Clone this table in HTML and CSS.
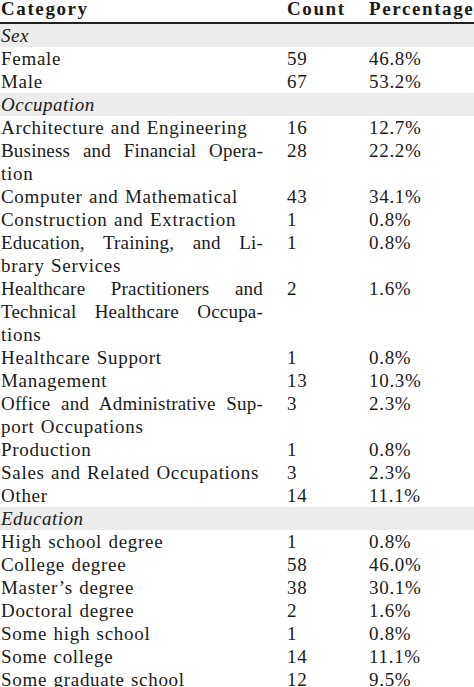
FILE: index.html
```html
<!DOCTYPE html>
<html lang="en">
<head>
<meta charset="utf-8">
<link rel="stylesheet" href="styles.css">
</head>
<body>
<div class="table">
  <div class="row head">
    <div class="c1">Category</div><div class="c2">Count</div><div class="c3">Percentage</div>
  </div>
  <div class="row group"><div class="c1"><i>Sex</i></div></div>
  <div class="row"><div class="c1">Female</div><div class="c2">59</div><div class="c3">46.8%</div></div>
  <div class="row"><div class="c1">Male</div><div class="c2">67</div><div class="c3">53.2%</div></div>
  <div class="row group"><div class="c1"><i>Occupation</i></div></div>
  <div class="row"><div class="c1">Architecture and Engineering</div><div class="c2">16</div><div class="c3">12.7%</div></div>
  <div class="row"><div class="c1"><span class="jl">Business and Financial Opera-</span><span class="ll">tion</span></div><div class="c2">28</div><div class="c3">22.2%</div></div>
  <div class="row"><div class="c1">Computer and Mathematical</div><div class="c2">43</div><div class="c3">34.1%</div></div>
  <div class="row"><div class="c1">Construction and Extraction</div><div class="c2">1</div><div class="c3">0.8%</div></div>
  <div class="row"><div class="c1"><span class="jl">Education, Training, and Li-</span><span class="ll">brary Services</span></div><div class="c2">1</div><div class="c3">0.8%</div></div>
  <div class="row"><div class="c1"><span class="jl">Healthcare Practitioners and</span><span class="jl">Technical Healthcare Occupa-</span><span class="ll">tions</span></div><div class="c2">2</div><div class="c3">1.6%</div></div>
  <div class="row"><div class="c1">Healthcare Support</div><div class="c2">1</div><div class="c3">0.8%</div></div>
  <div class="row"><div class="c1">Management</div><div class="c2">13</div><div class="c3">10.3%</div></div>
  <div class="row"><div class="c1"><span class="jl">Office and Administrative Sup-</span><span class="ll">port Occupations</span></div><div class="c2">3</div><div class="c3">2.3%</div></div>
  <div class="row"><div class="c1">Production</div><div class="c2">1</div><div class="c3">0.8%</div></div>
  <div class="row"><div class="c1">Sales and Related Occupations</div><div class="c2">3</div><div class="c3">2.3%</div></div>
  <div class="row"><div class="c1">Other</div><div class="c2">14</div><div class="c3">11.1%</div></div>
  <div class="row group"><div class="c1"><i>Education</i></div></div>
  <div class="row"><div class="c1">High school degree</div><div class="c2">1</div><div class="c3">0.8%</div></div>
  <div class="row"><div class="c1">College degree</div><div class="c2">58</div><div class="c3">46.0%</div></div>
  <div class="row"><div class="c1">Master’s degree</div><div class="c2">38</div><div class="c3">30.1%</div></div>
  <div class="row"><div class="c1">Doctoral degree</div><div class="c2">2</div><div class="c3">1.6%</div></div>
  <div class="row"><div class="c1">Some high school</div><div class="c2">1</div><div class="c3">0.8%</div></div>
  <div class="row"><div class="c1">Some college</div><div class="c2">14</div><div class="c3">11.1%</div></div>
  <div class="row"><div class="c1">Some graduate school</div><div class="c2">12</div><div class="c3">9.5%</div></div>
</div>
</body>
</html>
```
FILE: styles.css
```css
html, body {
  margin: 0;
  padding: 0;
  background: #ffffff;
}
body {
  font-family: "Liberation Serif", "Times New Roman", serif;
  font-size: 19px;
  line-height: 23px;
  letter-spacing: 0.7px;
  word-spacing: 1px;
  color: #1a1a1a;
  overflow: hidden;
}
.table {
  width: 474px;
  margin-top: -3px;
}
.row {
  display: grid;
  grid-template-columns: 287px 82px 1fr;
}
.c1 {
  padding-right: 24px;
  padding-left: 1px;
}
.c3 {
  white-space: nowrap;
}
.head {
  font-weight: bold;
  letter-spacing: 1.6px;
  border-bottom: 2px solid #222;
  height: 27px;
  box-sizing: border-box;
}
.group {
  background: #ececec;
}
.group i {
  font-style: italic;
  letter-spacing: 0.5px;
}
.jl {
  display: block;
  letter-spacing: 0.2px;
  word-spacing: 0;
  text-align: justify;
  text-align-last: justify;
}
.ll {
  display: block;
}
```
